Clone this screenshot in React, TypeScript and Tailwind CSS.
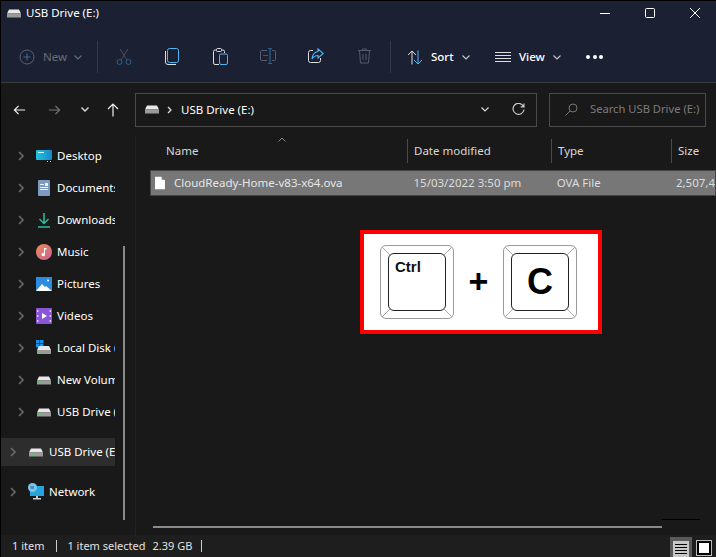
const DriveIcon = ({ className = "" }: { className?: string }) => (
  <svg width="14" height="9" viewBox="1 1 14 8" className={className}>
    <path d="M3 1h10l2 4H1z" fill="#e8e8e8" />
    <rect x="1" y="5" width="14" height="4" fill="#9a9a9a" />
    <rect x="3" y="6.5" width="2" height="1" fill="#45e04f" />
  </svg>
);

const Chevron = () => (
  <svg width="8" height="10" viewBox="0 0 8 10" fill="none" stroke="#6a6a6a" strokeWidth="1.6">
    <path d="M2 1l4 4-4 4" />
  </svg>
);

const SmallDown = ({ color = "#c8c8c8" }: { color?: string }) => (
  <svg width="8" height="5" viewBox="0 0 8 5" fill="none" stroke={color} strokeWidth="1.1">
    <path d="M.5 .5L4 4 7.500 .5" />
  </svg>
);

const Desktop = () => (
  <svg width="16" height="14" viewBox="0 0 16 14">
    <defs>
      <linearGradient id="d" x1="0" y1="0" x2="1" y2="0">
        <stop offset="0" stopColor="#1ec6e0" />
        <stop offset="1" stopColor="#1b86c8" />
      </linearGradient>
    </defs>
    <rect x="0" y="1" width="16" height="10" rx="1" fill="url(#d)" />
    <rect x="2" y="3" width="6" height="1" fill="#d6f4fa" />
    <rect x="11" y="12" width="1" height="1" fill="#b5d5e0" />
    <rect x="14" y="12" width="1" height="1" fill="#b5d5e0" />
  </svg>
);

const Documents = () => (
  <svg width="16" height="16" viewBox="0 0 16 16">
    <rect x="2" y="0" width="12" height="16" rx="1" fill="#7d9ac0" />
    <rect x="4" y="4" width="4" height="1" fill="#eef" />
    <rect x="4" y="7" width="8" height="1" fill="#eef" />
    <rect x="4" y="9" width="8" height="1" fill="#eef" />
    <rect x="9" y="3" width="3" height="3" fill="#eef" />
  </svg>
);

const Downloads = () => (
  <svg width="16" height="16" viewBox="0 0 16 16" fill="none" stroke="#2bbf9b" strokeWidth="1.5">
    <path d="M8 1v10M3.500 7l4.500 4.500L12.500 7" />
    <path d="M2 15h12" />
  </svg>
);

const Music = () => (
  <svg width="16" height="16" viewBox="0 0 16 16">
    <defs>
      <linearGradient id="m" x1="0" y1="0" x2="1" y2="1">
        <stop offset="0" stopColor="#ef8a5a" />
        <stop offset="1" stopColor="#c9628f" />
      </linearGradient>
    </defs>
    <circle cx="8" cy="8" r="8" fill="url(#m)" />
    <path d="M8 4h2.500v1.500H9V10.500a1.700 1.700 0 1 1-1-1.500z" fill="#fff" />
  </svg>
);

const Pictures = () => (
  <svg width="16" height="14" viewBox="0 0 16 14">
    <rect width="16" height="14" fill="#2a8de0" />
    <path d="M0 14l6-7 3 3 1-1 6 5z" fill="#fff" />
    <circle cx="12" cy="3.500" r="1" fill="#fff" />
  </svg>
);

const Videos = () => (
  <svg width="16" height="16" viewBox="0 0 16 16">
    <rect width="16" height="16" rx="1" fill="#8a56d8" />
    <rect x="1" y="2" width="1.500" height="2" fill="#d9c6f5" />
    <rect x="1" y="7" width="1.500" height="2" fill="#d9c6f5" />
    <rect x="1" y="12" width="1.500" height="2" fill="#d9c6f5" />
    <rect x="13.500" y="2" width="1.500" height="2" fill="#d9c6f5" />
    <rect x="13.500" y="7" width="1.500" height="2" fill="#d9c6f5" />
    <rect x="13.500" y="12" width="1.500" height="2" fill="#d9c6f5" />
    <path d="M6 5l5 3-5 3z" fill="#fff" />
  </svg>
);

const LocalDisk = () => (
  <svg width="16" height="16" viewBox="0 0 16 16">
    <rect x="0" y="0" width="3.500" height="3.500" fill="#1a8fe8" />
    <rect x="4" y="0" width="3.500" height="3.500" fill="#1a8fe8" />
    <rect x="0" y="4" width="3.500" height="3.500" fill="#1a8fe8" />
    <rect x="4" y="4" width="3.500" height="3.500" fill="#1a8fe8" />
    <path d="M3 6h10l2 4H1z" fill="#e8e8e8" />
    <rect x="1" y="10" width="14" height="4" fill="#9a9a9a" />
    <rect x="3" y="11.500" width="2" height="1" fill="#45e04f" />
  </svg>
);

const Network = () => (
  <svg width="16" height="18" viewBox="0 0 16 18">
    <rect x="2" y="3" width="14" height="10" fill="#25a4de" />
    <rect x="8" y="13" width="2" height="2" fill="#c8d0d8" />
    <rect x="5" y="15" width="8" height="1.500" fill="#c8d0d8" />
    <circle cx="4.500" cy="4.500" r="4.500" fill="#7fc4e8" />
    <path d="M2 3h4v3H3z" fill="#3f8fc0" />
  </svg>
);

const NavRow = ({ icon, label, selected = false, top = false }: { icon: React.ReactNode; label: string; selected?: boolean; top?: boolean }) => (
  <div className={`flex w-[114px] items-center overflow-hidden whitespace-nowrap ${top ? "pl-[8px]" : "pl-[16px]"} ${selected ? "h-7 bg-[#2d2d2d]" : "h-8"}`}>
    <span className="flex w-[19px] shrink-0"><Chevron /></span>
    <span className="flex w-4 shrink-0 items-center justify-center">{icon}</span>
    <span className="ml-[5px] text-white">{label}</span>
  </div>
);

const Key = ({ children }: { children: React.ReactNode }) => (
  <div className="relative h-[74px] w-[74px] rounded-[6px] border border-[#9a9a9a] bg-white">
    <svg width="72" height="72" viewBox="0 0 72 72" className="absolute inset-0" stroke="#a8a8a8" fill="none">
      <path d="M1 1l8 8M71 1l-8 8M1 71l8-8M71 71l-8-8" />
    </svg>
    <div className="absolute inset-[7px] rounded-[6px] border border-[#222] bg-white">{children}</div>
  </div>
);

export default function App() {
  return (
    <div className="relative flex h-[557px] w-[716px] flex-col overflow-hidden border-l border-t border-black bg-[#191919] font-['Noto_Sans','Open_Sans',sans-serif] text-[11.5px] text-white">
      {/* title bar */}
      <div className="flex h-[82px] flex-col border-b border-[#3a3a3a] bg-[#1b2133]">
        <div className="flex h-[24px] items-center pl-[6px]">
          <DriveIcon />
          <span className="ml-[5px]">USB Drive (E:)</span>
          <div className="ml-auto flex h-full items-center">
            <svg width="12" height="12" viewBox="0 0 12 12" className="mr-[33px]" stroke="#fff" fill="none"><path d="M1 6.500h10" /></svg>
            <svg width="12" height="12" viewBox="0 0 12 12" className="mr-[33px]" stroke="#fff" fill="none"><rect x="1.500" y="1.500" width="9" height="9" rx="1" /></svg>
            <svg width="12" height="12" viewBox="0 0 12 12" className="mr-[15px]" stroke="#fff" fill="none"><path d="M1 1l10 10M11 1L1 11" /></svg>
          </div>
        </div>
        <div className="mt-[16px] flex h-8 items-center">
          {/* new */}
          <div className="ml-[18px] flex w-[78px] items-center">
            <svg width="16" height="16" viewBox="0 0 16 16" fill="none" stroke="#5a6272"><circle cx="8" cy="8" r="7" /><path d="M8 4.500v7M4.500 8h7" stroke="#3d6d99" /></svg>
            <span className="ml-2 text-[#6a6e78]">New</span>
            <span className="ml-[7px] flex"><SmallDown color="#6a6e78" /></span>
          </div>
          <div className="h-8 w-px bg-[#333a4c]" />
          <div className="ml-[2px] flex">
            <div className="flex w-12 justify-center">
              <svg width="16" height="18" viewBox="0 0 16 18" fill="none" stroke="#2f5f8c"><circle cx="3.500" cy="14" r="2.500" /><circle cx="12.500" cy="14" r="2.500" /><path d="M5 12L12 1M11 12L4 1" stroke="#4a505e" /></svg>
            </div>
            <div className="flex w-12 justify-center">
              <svg width="14" height="17" viewBox="0 0 14 17" fill="none"><rect x="2.500" y=".5" width="11" height="14" rx="2" stroke="#4db4f5" /><path d="M.5 3v11a2.500 2.500 0 0 0 2.500 2.500h8" stroke="#ddd" /></svg>
            </div>
            <div className="flex w-12 justify-center">
              <svg width="15" height="17" viewBox="0 0 15 17" fill="none"><path d="M6 16.500H2A1.500 1.500 0 0 1 .5 15V3.500A1.500 1.500 0 0 1 2 2h8a1.500 1.500 0 0 1 1.500 1.500V5" stroke="#ddd" /><rect x="3.500" y=".5" width="5" height="3" rx="1" fill="#1b2133" stroke="#ddd" /><rect x="6.500" y="6" width="8" height="10.500" rx="1.500" stroke="#4db4f5" /></svg>
            </div>
            <div className="flex w-12 justify-center">
              <svg width="16" height="16" viewBox="0 0 16 16" fill="none"><path d="M7 2.500H2A1.500 1.500 0 0 0 .5 4v7A1.500 1.500 0 0 0 2 12.500h5M12 2.500h2.500A1 1 0 0 1 15.500 4v7a1 1 0 0 1-1 1.500H12" stroke="#575d6b" /><path d="M8 .5h4M10 .5v15M8 15.500h4M3 7.500h5" stroke="#2f5f8c" strokeWidth="1.200" /></svg>
            </div>
            <div className="flex w-12 justify-center">
              <svg width="16" height="15" viewBox="0 0 16 15" fill="none"><path d="M5 2.500H2.500a2 2 0 0 0-2 2v8a2 2 0 0 0 2 2h8a2 2 0 0 0 2-2V10" stroke="#ddd" /><path d="M10 .8l5.200 4.700L10 10V7.500C7 7.500 5.500 8.500 4 11c.3-4 2.500-7 6-7.500z" stroke="#4db4f5" strokeWidth="1.100" /></svg>
            </div>
            <div className="flex w-12 justify-center">
              <svg width="13" height="16" viewBox="0 0 13 16" fill="none" stroke="#555b68"><path d="M0 2.500h13M4.500 2.500V1h4v1.500M1.500 2.500l1 12.500h8l1-12.500M5 6v6M8 6v6" /></svg>
            </div>
          </div>
          <div className="ml-[2px] h-8 w-px bg-[#333a4c]" />
          <div className="ml-4 flex w-[88px] items-center">
            <svg width="16" height="15" viewBox="0 0 16 15" fill="none"><path d="M5 14.500V1M1 5l4-4 4 4" stroke="#ddd" /><path d="M11 .5V14M7 10l4 4 4-4" stroke="#4db4f5" /></svg>
            <span className="ml-2 font-medium">Sort</span>
            <span className="ml-2 flex"><SmallDown /></span>
          </div>
          <div className="flex w-[91px] items-center">
            <svg width="16" height="11" viewBox="0 0 16 11" stroke="#ddd"><path d="M0 .5h16M0 3.500h16M0 6.500h16M0 9.500h16" /></svg>
            <span className="ml-2 font-medium">View</span>
            <span className="ml-2 flex"><SmallDown /></span>
          </div>
          <div className="flex gap-[2.500px]">
            <span className="h-[4px] w-[4px] rounded-full bg-white" />
            <span className="h-[4px] w-[4px] rounded-full bg-white" />
            <span className="h-[4px] w-[4px] rounded-full bg-white" />
          </div>
        </div>
      </div>

      {/* address bar */}
      <div className="flex h-[53px] items-center">
        <div className="ml-[12px] flex w-[122px] items-center">
          <svg width="13" height="12" viewBox="0 0 14 12" fill="none" stroke="#eee" strokeWidth="1.300"><path d="M13 6H1.500M6 1.500L1.500 6 6 10.500" /></svg>
          <svg width="13" height="12" viewBox="0 0 14 12" fill="none" stroke="#777" strokeWidth="1.300" className="ml-[22px]"><path d="M1 6h11.500M8 1.500L12.500 6 8 10.500" /></svg>
          <svg width="8" height="5" viewBox="0 0 8 5" fill="none" stroke="#ddd" strokeWidth="1.400" className="ml-[20px]"><path d="M.5 .5L4 4 7.500 .5" /></svg>
          <svg width="12" height="14" viewBox="0 0 12 14" fill="none" stroke="#eee" strokeWidth="1.200" className="ml-[18px]"><path d="M6 13.500V1M1 6l5-5 5 5" /></svg>
        </div>
        <div className="flex h-[34px] w-[402px] items-center border border-[#4a4a4a] pl-[9px]">
          <DriveIcon />
          <svg width="5" height="8" viewBox="0 0 5 8" fill="none" stroke="#ddd" strokeWidth="1.300" className="ml-[8px]"><path d="M1 1l3 3-3 3" /></svg>
          <span className="ml-[9px]">USB Drive (E:)</span>
          <span className="ml-auto flex"><SmallDown color="#ddd" /></span>
          <svg width="13" height="13" viewBox="0 0 13 13" fill="none" stroke="#ccc" strokeWidth="1.200" className="ml-[23px] mr-[11px]"><path d="M11.500 3.500A5.500 5.500 0 1 0 12 6.500M12 .5v3.300H8.700" /></svg>
        </div>
        <div className="ml-[12px] flex h-[34px] w-[157px] items-center whitespace-nowrap border border-[#4a4a4a] pl-[15px]">
          <svg width="13" height="13" viewBox="0 0 13 13" fill="none" stroke="#777"><circle cx="8" cy="5" r="4" /><path d="M5 8l-4.500 4.500" /></svg>
          <span className="ml-[12px] text-[11.2px] text-[#7b7b7b]">Search USB Drive (E:)</span>
        </div>
      </div>

      {/* main */}
      <div className="flex min-h-0 flex-1">
        <div className="relative w-[135px] shrink-0 border-r border-[#232323] pt-[4px]">
          <NavRow icon={<Desktop />} label="Desktop" />
          <NavRow icon={<Documents />} label="Documents" />
          <NavRow icon={<Downloads />} label="Downloads" />
          <NavRow icon={<Music />} label="Music" />
          <NavRow icon={<Pictures />} label="Pictures" />
          <NavRow icon={<Videos />} label="Videos" />
          <NavRow icon={<LocalDisk />} label="Local Disk (C:)" />
          <NavRow icon={<DriveIcon />} label="New Volume (D:)" />
          <NavRow icon={<DriveIcon />} label="USB Drive (E:)" />
          <div className="mt-[10px]"><NavRow top selected icon={<DriveIcon />} label="USB Drive (E:)" /></div>
          <div className="mt-[10px]"><NavRow top icon={<Network />} label="Network" /></div>
          <div className="absolute left-[122px] top-[110px] h-[274px] w-[2px] bg-[#8a8a8a]" />
        </div>
        <div className="relative min-w-0 flex-1 pl-[14px]">
          <div className="relative flex h-[34px] items-center pb-[4px] text-[#d8d8d8]">
            <svg width="8" height="5" viewBox="0 0 8 5" fill="none" stroke="#888" className="absolute left-[128px] top-[1px]"><path d="M.5 4.500L4 1l3.500 3.500" /></svg>
            <div className="flex h-6 w-[257px] items-center pl-[16px]">Name</div>
            <div className="flex h-6 w-[144px] items-center border-l border-[#4a4a4a] pl-[6px]">Date modified</div>
            <div className="flex h-6 w-[120px] items-center border-l border-[#4a4a4a] pl-[6px]">Type</div>
            <div className="flex h-6 flex-1 items-center border-l border-[#4a4a4a] pl-[6px]">Size</div>
          </div>
          <div className="flex h-[26px] items-center whitespace-nowrap border border-[#444] bg-[#777777]">
            <svg width="10" height="14" viewBox="0 0 11 14" className="ml-[4px]"><path d="M0 0h7l4 4v10H0z" fill="#fff" /><path d="M7.500 0L11 3.500H7.500z" fill="#777" /></svg>
            <span className="ml-[9px] w-[241px] text-[#e6e6e6]">CloudReady-Home-v83-x64.ova</span>
            <span className="w-[144px] text-[#dcdcdc]">15/03/2022 3:50 pm</span>
            <span className="w-[120px] text-[#dcdcdc]">OVA File</span>
            <span className="text-[#dcdcdc]">2,507,4</span>
          </div>
          <div className="absolute bottom-[7px] left-[17px] h-[2px] w-[509px] bg-[#8a8a8a]" />
          <div className="absolute bottom-[15px] left-[526px] h-px w-[38px] bg-black" />
        </div>
      </div>

      {/* status bar */}
      <div className="flex h-[22px] items-center bg-[#1e1e1e] pl-[11px] text-[11px] text-[#e2e2e2]">
        <span>1 item</span>
        <span className="ml-[12px] h-3 w-px bg-[#ccc]" />
        <span className="ml-[10px]">1 item selected</span>
        <span className="ml-[7px]">2.39 GB</span>
        <span className="ml-[9px] h-3 w-px bg-[#ccc]" />
        <div className="ml-auto flex h-full items-end">
          <div className="flex h-[20px] w-[22px] items-end justify-center bg-[#5a5a5a]">
            <div className="flex h-4 w-4 flex-col justify-center gap-[2px] bg-[#c8c8c8] px-[2px]">
              <span className="h-px bg-black" />
              <span className="h-px bg-black" />
              <span className="h-px bg-black" />
              <span className="h-px bg-black" />
            </div>
          </div>
          <div className="flex h-[18px] w-[24px] items-center justify-center">
            <div className="flex h-4 w-4 flex-col border border-[#bbb] bg-black p-[2px]"><span className="flex-1 bg-white" /></div>
          </div>
        </div>
      </div>

      {/* red highlight */}
      <div className="absolute left-[359px] top-[229px] flex h-[104px] w-[242px] items-center border-[4px] border-[#ff0000] bg-white pl-[16px]">
        <Key><span className="absolute left-[6px] top-[5px] font-['Liberation_Sans',sans-serif] text-[15px] font-bold leading-4 text-[#111]">Ctrl</span></Key>
        <span className="flex w-[49px] justify-center pb-[3px] font-['Liberation_Sans',sans-serif] text-[34px] font-bold leading-none text-black">+</span>
        <Key><span className="flex h-full items-center justify-center font-['Liberation_Sans',sans-serif] text-[36px] font-bold leading-none text-black">C</span></Key>
      </div>
    </div>
  );
}
